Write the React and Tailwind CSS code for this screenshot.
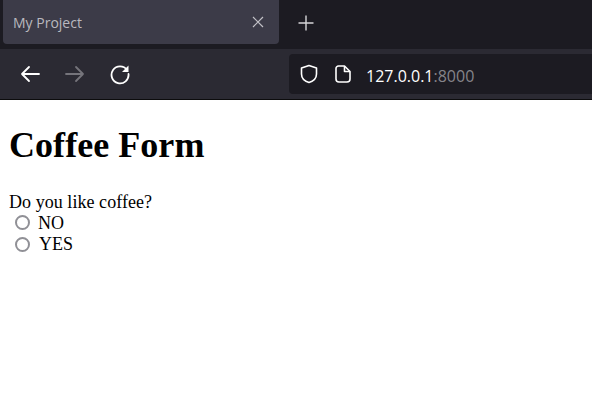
import React from "react";

function Stroke({ children, className, size = 22, width = 2 }) {
  return (
    <svg width={size} height={size} viewBox="0 0 22 22" fill="none" stroke="currentColor" strokeWidth={width} strokeLinecap="round" strokeLinejoin="round" className={className}>
      {children}
    </svg>
  );
}

export default function App() {
  return (
    <div className="w-[592px] h-[419px] overflow-hidden bg-white flex flex-col">
      <div className="h-[49px] bg-[#1c1b22] flex items-start pl-[3px] font-['Open_Sans',sans-serif]">
        <div className="w-[276px] h-[44px] bg-[#3c3b48] rounded-b-[4px] flex items-center justify-between pl-[10px] pr-[15px]">
          <span className="text-[14px] text-[#b9b8bf]">My Project</span>
          <svg width="12" height="12" viewBox="0 0 12 12" stroke="#c2c1c7" strokeWidth="1.2" className="shrink-0">
            <path d="M1 1l10 10M11 1L1 11" />
          </svg>
        </div>
        <div className="ml-[19px] h-[46px] flex items-center">
          <svg width="16" height="16" viewBox="0 0 16 16" stroke="#d5d5d8" strokeWidth="1.4">
            <path d="M8 .5v15M.5 8h15" />
          </svg>
        </div>
      </div>
      <div className="h-[51px] bg-[#2b2a33] border-b border-[#0c0c0d] flex items-center font-['Open_Sans',sans-serif]">
        <div className="flex items-center pl-[19px] text-white">
          <Stroke width={1.8}>
            <path d="M20 11H3M10 4l-7 7 7 7" />
          </Stroke>
          <Stroke width={1.8} className="ml-[23px] text-[#75747b]">
            <path d="M2 11h17M12 4l7 7-7 7" />
          </Stroke>
          <Stroke width={1.8} className="ml-[23px]">
            <path d="M18 7a8.500 8.500 0 1 0 1.500 4" />
            <path d="M19.500 2.500v6.500h-6.500z" fill="currentColor" stroke="none" />
          </Stroke>
        </div>
        <div className="ml-[158px] flex-1 h-[40px] bg-[#1c1b22] rounded-l-[4px] flex items-center pl-[10px] text-white">
          <svg width="20" height="20" viewBox="0 0 20 20" fill="none" stroke="currentColor" strokeWidth="1.6" strokeLinejoin="round">
            <path d="M10 1.5l7.5 2.5v6c0 4.5-3.3 7.2-7.5 8.5-4.2-1.3-7.5-4-7.5-8.5V4z" />
          </svg>
          <svg width="16" height="18" viewBox="0 0 16 18" fill="none" stroke="currentColor" strokeWidth="1.6" strokeLinejoin="round" className="ml-[16px]">
            <path d="M3.5 1h6l5.5 5.500V14a3 3 0 0 1-3 3H4a3 3 0 0 1-3-3V3.500A2.500 2.500 0 0 1 3.500 1z" />
            <path d="M9.500 1v5.500H15" />
          </svg>
          <span className="ml-[15px] text-[16px] leading-[22px] mt-[3px] text-white">
            127.0.0.1<span className="text-[#85848a]">:8000</span>
          </span>
        </div>
      </div>
      <div className="font-['Liberation_Serif',serif] text-black px-[9px] tracking-[0.05px]">
        <h1 className="text-[36px] font-bold leading-[41px] mt-[25px] mb-[25px]">Coffee Form</h1>
        <div className="text-[18px] h-[20px] leading-[22px]">Do you like coffee?</div>
        <div className="text-[18px] leading-[22px]">
          {["NO", "YES"].map((label) => (
            <label key={label} className="flex items-center h-[22px] pl-[6px]">
              <span className="w-[15px] h-[15px] rounded-full border-2 border-[#909096] bg-white" />
              <span className={label === "NO" ? "ml-[8px] pt-[2px]" : "ml-[9px]"}>{label}</span>
            </label>
          ))}
        </div>
      </div>
    </div>
  );
}
